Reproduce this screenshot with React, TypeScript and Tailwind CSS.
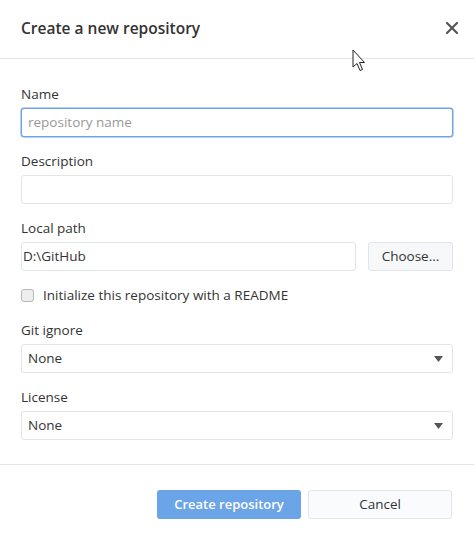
import React from "react";

const font = { fontFamily: '"Open Sans", "Noto Sans", Arial, sans-serif' };

function Label({ children }: { children: React.ReactNode }) {
  return <div className="h-5 text-[13.5px] leading-5 text-[#333]">{children}</div>;
}

function SelectBox({ value }: { value: string }) {
  return (
    <div className="mt-1 flex h-[29px] items-center justify-between rounded-[3px] border border-[#e1e4e8] bg-white pl-[6px] pr-[9px] text-[13.5px] text-[#333]">
      <span>{value}</span>
      <svg width="9" height="6" viewBox="0 0 9 6">
        <path d="M0 0 H9 L4.5 6 Z" fill="#555" />
      </svg>
    </div>
  );
}

export default function App() {
  return (
    <div className="relative w-[474px] h-[542px] bg-white overflow-hidden" style={font}>
      <div className="flex h-[59px] items-center justify-between border-b border-[#e1e4e8] pl-[21px] pr-[16px]">
        <div className="text-[15.5px] font-semibold text-[#333]">Create a new repository</div>
        <svg width="12" height="12" viewBox="0 0 12 12" className="-mt-[2px]">
          <path d="M1 1 L11 11 M11 1 L1 11" stroke="#555" strokeWidth="2.2" strokeLinecap="round" />
        </svg>
      </div>

      <div className="flex flex-col px-[21px] pt-[25px] pb-[24px] border-b border-[#e1e4e8]">
        <Label>Name</Label>
        <div className="mt-1 flex h-[29px] items-center rounded-[3px] border border-[#6aa5e8] bg-white pl-[6px] text-[13.5px] text-[#999] shadow-[0_0_0_0.5px_#6aa5e8]">
          repository name
        </div>

        <div className="mt-[14px]">
          <Label>Description</Label>
          <div className="mt-1 h-[29px] rounded-[3px] border border-[#e1e4e8] bg-white" />
        </div>

        <div className="mt-[14px]">
          <Label>Local path</Label>
          <div className="mt-1 flex gap-[12px]">
            <div className="flex h-[29px] flex-1 items-center rounded-[3px] border border-[#e1e4e8] bg-white pl-[1px] text-[13.5px] text-[#333]">
              D:\GitHub
            </div>
            <div className="flex h-[29px] w-[85px] items-center justify-center rounded-[3px] border border-[#e1e4e8] bg-[#f6f8fa] text-[13.5px] text-[#333]">
              Choose...
            </div>
          </div>
        </div>

        <div className="mt-[17px] flex h-[14px] items-center gap-[9px]">
          <div className="h-[13px] w-[13px] rounded-[3px] border border-[#b5b5b5] bg-[#eeeeee]" />
          <span className="text-[13.5px] text-[#333]">Initialize this repository with a README</span>
        </div>

        <div className="mt-[18px]">
          <Label>Git ignore</Label>
          <SelectBox value="None" />
        </div>

        <div className="mt-[14px]">
          <Label>License</Label>
          <SelectBox value="None" />
        </div>
      </div>

      <div className="flex justify-end gap-[7px] px-[22px] pt-[25px]">
        <div className="flex h-[29px] w-[144px] items-center justify-center rounded-[3px] bg-[#6ba4e7] text-[13px] font-semibold text-white">
          Create repository
        </div>
        <div className="flex h-[29px] w-[144px] items-center justify-center rounded-[3px] border border-[#e1e4e8] bg-[#fafbfc] text-[13.5px] text-[#333]">
          Cancel
        </div>
      </div>

      <svg className="absolute left-[352px] top-[49px]" width="14" height="24" viewBox="0 0 14 24">
        <path d="M1 1 L1 18 L5 14.5 L8 21.5 L10.5 20.5 L7.5 13.5 L12.5 13.5 Z" fill="white" stroke="#222" strokeWidth="1" strokeLinejoin="miter" />
      </svg>
    </div>
  );
}
